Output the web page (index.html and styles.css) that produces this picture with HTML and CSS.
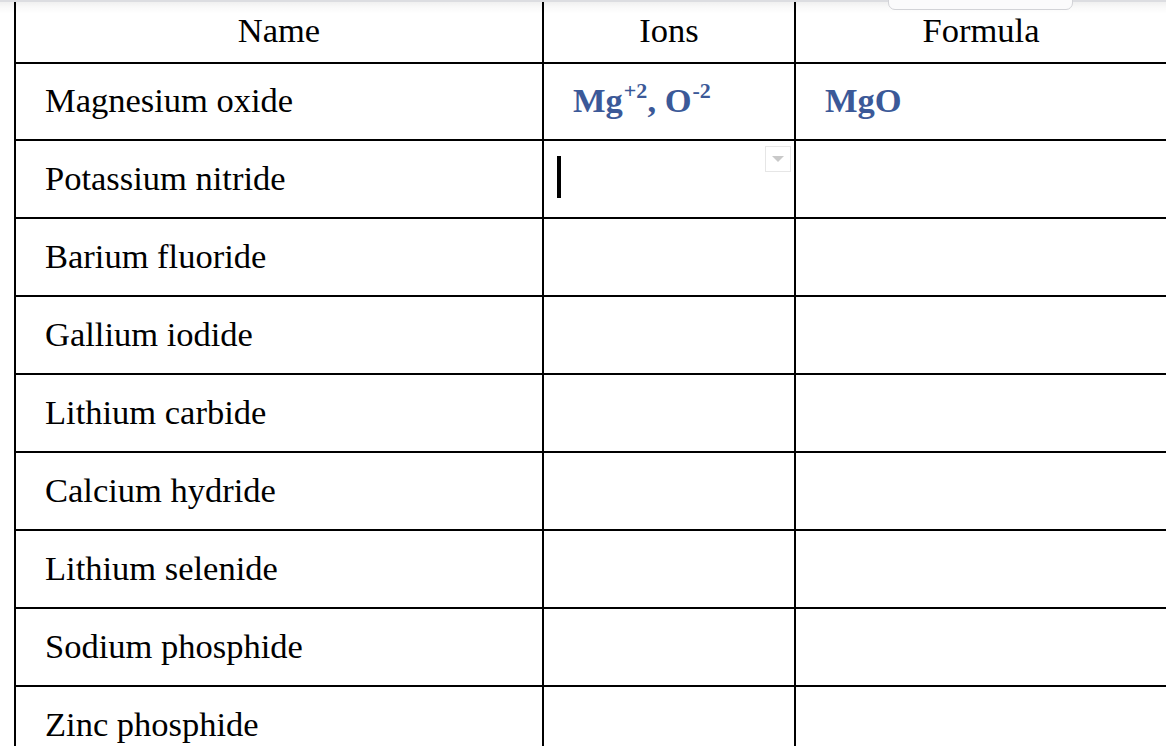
FILE: index.html
```html
<!DOCTYPE html>
<html lang="en">
<head>
<meta charset="utf-8">
<title>Ionic compounds</title>
<link rel="stylesheet" href="styles.css">
</head>
<body>
<div class="page">
  <div class="shade"></div>
  <div class="tab"></div>
  <div class="sheet">
    <div class="row head">
      <div class="cell">Name</div>
      <div class="cell">Ions</div>
      <div class="cell">Formula</div>
    </div>
    <div class="row first">
      <div class="cell">Magnesium oxide</div>
      <div class="cell answer"><span>Mg<sup>+2</sup>, O<sup>-2</sup></span></div>
      <div class="cell answer"><span>MgO</span></div>
    </div>
    <div class="row">
      <div class="cell">Potassium nitride</div>
      <div class="cell active"><span class="caret"></span><span class="drop"><span class="tri"></span></span></div>
      <div class="cell"></div>
    </div>
    <div class="row">
      <div class="cell">Barium fluoride</div>
      <div class="cell"></div>
      <div class="cell"></div>
    </div>
    <div class="row">
      <div class="cell">Gallium iodide</div>
      <div class="cell"></div>
      <div class="cell"></div>
    </div>
    <div class="row">
      <div class="cell">Lithium carbide</div>
      <div class="cell"></div>
      <div class="cell"></div>
    </div>
    <div class="row">
      <div class="cell">Calcium hydride</div>
      <div class="cell"></div>
      <div class="cell"></div>
    </div>
    <div class="row">
      <div class="cell">Lithium selenide</div>
      <div class="cell"></div>
      <div class="cell"></div>
    </div>
    <div class="row">
      <div class="cell">Sodium phosphide</div>
      <div class="cell"></div>
      <div class="cell"></div>
    </div>
    <div class="row">
      <div class="cell">Zinc phosphide</div>
      <div class="cell"></div>
      <div class="cell"></div>
    </div>
  </div>
</div>
</body>
</html>
```

FILE: styles.css
```css
html, body {
  margin: 0;
  padding: 0;
  background: #fff;
}

body {
  width: 1166px;
  height: 746px;
  overflow: hidden;
  font-family: "Liberation Serif", "Times New Roman", serif;
  color: #000;
}

.page {
  position: relative;
  width: 1166px;
  height: 746px;
  overflow: hidden;
}

.shade {
  position: absolute;
  left: 0;
  top: 0;
  width: 100%;
  height: 14px;
  z-index: 2;
  background: linear-gradient(to bottom,
    #dcdde1 0px, #dcdde1 2px,
    rgba(0, 0, 0, 0.06) 2px,
    rgba(0, 0, 0, 0.02) 8px,
    rgba(0, 0, 0, 0) 14px);
}

.tab {
  position: absolute;
  left: 888px;
  top: -8px;
  width: 183px;
  height: 16px;
  z-index: 3;
  background: #fbfbfc;
  border: 1px solid #d2d3d7;
  border-radius: 0 0 7px 7px;
}

.sheet {
  margin: -14px 0 0 14px;
  width: 1150px;
  border-left: 2px solid #000;
}

.row {
  display: grid;
  grid-template-columns: 528px 252px 1fr;
  height: 78px;
}

.row.first {
  height: 77px;
}

.cell {
  box-sizing: border-box;
  border-right: 2px solid #000;
  border-bottom: 2px solid #000;
  display: flex;
  align-items: center;
  padding-left: 29px;
  padding-bottom: 2px;
  font-size: 34.5px;
  white-space: nowrap;
}

.cell:last-child {
  border-right: none;
}

.head .cell {
  justify-content: center;
  padding-left: 0;
  padding-bottom: 0;
  padding-top: 12px;
}

.answer {
  color: #3b5998;
  font-weight: bold;
}

.answer sup {
  font-size: 22px;
  line-height: 0;
  margin-left: 1px;
  vertical-align: 14px;
}

.active {
  position: relative;
}

.caret {
  position: absolute;
  left: 13px;
  top: 15px;
  width: 4px;
  height: 42px;
  background: #000;
}

.drop {
  position: absolute;
  right: 3px;
  top: 5px;
  width: 26px;
  height: 26px;
  box-sizing: border-box;
  border: 1px solid #e6e6e6;
  background: #fff;
  display: flex;
  align-items: center;
  justify-content: center;
}

.tri {
  width: 0;
  height: 0;
  border-left: 6px solid transparent;
  border-right: 6px solid transparent;
  border-top: 6px solid #c9c9c9;
}
```
